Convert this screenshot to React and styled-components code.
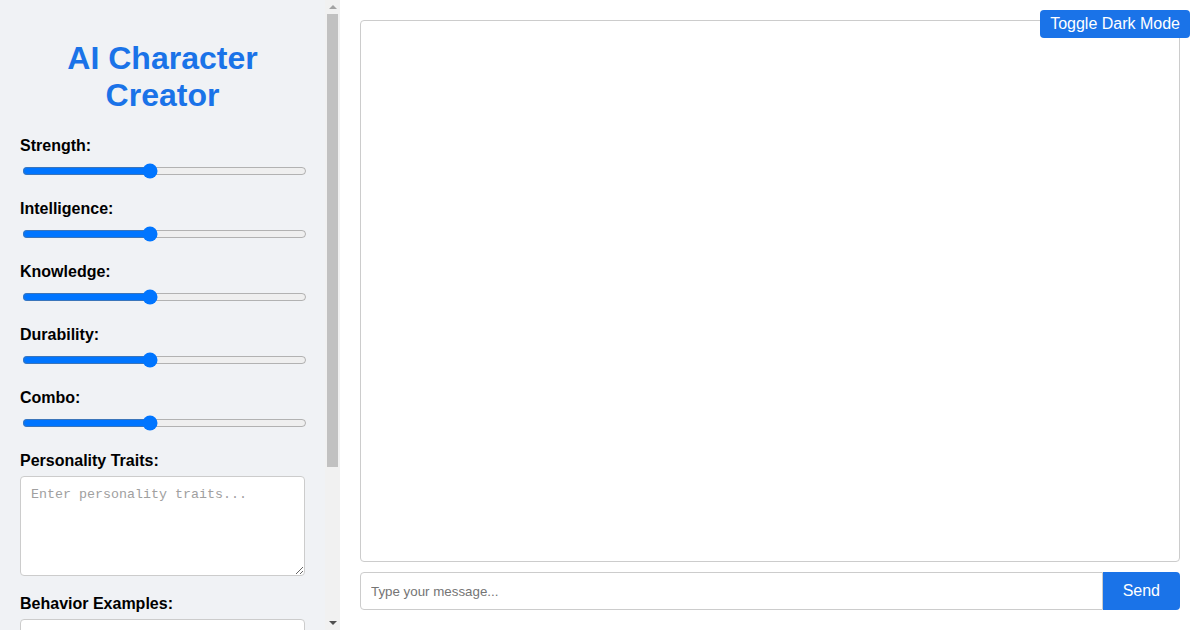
import React from "react";
import styled, { createGlobalStyle } from "styled-components";

const Global = createGlobalStyle`
  html, body {
    margin: 0;
    padding: 0;
    height: 100%;
    font-family: "Liberation Sans", Arial, sans-serif;
  }
  #root {
    height: 100%;
  }
`

const Layout = styled.div`
  display: flex;
  height: 100vh;
  position: relative;
`

const Sidebar = styled.div`
  width: 340px;
  flex-shrink: 0;
  display: flex;
  background: #f0f2f5;
`

const SidebarScroll = styled.div`
  flex: 1;
  min-width: 0;
  box-sizing: border-box;
  padding: 20px;
  overflow-y: auto;
  overflow-x: hidden;
  scrollbar-width: none;
  &::-webkit-scrollbar {
    display: none;
  }
  h1 {
    color: #1a73e8;
    text-align: center;
    font-size: 32px;
    line-height: 37px;
    margin: 20px 0 23px;
  }
`

const ScrollBar = styled.div`
  width: 15px;
  flex-shrink: 0;
  display: flex;
  flex-direction: column;
  background: #f1f1f1;
`

const Arrow = styled.div`
  height: 14px;
  flex-shrink: 0;
  display: flex;
  align-items: center;
  justify-content: center;
  &::after {
    content: "";
    width: 0;
    height: 0;
    border-left: 4px solid transparent;
    border-right: 4px solid transparent;
    ${p => p.$down
      ? "border-top: 4px solid #505050;"
      : "border-bottom: 4px solid #a3a3a3;"}
  }
`

const Track = styled.div`
  flex: 1;
  padding: 0 2px;
`

const Thumb = styled.div`
  height: 453px;
  background: #c1c1c1;
`

const Field = styled.div`
  display: flex;
  flex-direction: column;
  align-items: flex-start;
  margin-bottom: 19px;
  label {
    font-weight: bold;
    font-size: 16px;
    line-height: 18px;
    margin-bottom: 5px;
  }
  input[type="range"] {
    width: 100%;
    height: 16px;
    box-sizing: border-box;
    margin: 3px 2px 2px;
  }
  textarea {
    width: 100%;
    height: 100px;
    box-sizing: border-box;
    margin: 1px 0 0;
    padding: 10px;
    border: 1px solid #ccc;
    border-radius: 4px;
    resize: vertical;
    font-family: "Liberation Mono", monospace;
    font-size: 13.33px;
  }
  textarea::placeholder {
    color: #a0a0a0;
  }
`

const Main = styled.div`
  flex: 1;
  display: flex;
  flex-direction: column;
  padding: 20px;
  box-sizing: border-box;
  background: #fff;
`

const ChatBox = styled.div`
  flex: 1;
  border: 1px solid #ccc;
  border-radius: 4px;
  overflow-y: auto;
`

const InputRow = styled.div`
  display: flex;
  margin-top: 10px;
  input {
    flex: 1;
    padding: 10px;
    border: 1px solid #ccc;
    border-radius: 4px 0 0 4px;
    font-family: "Liberation Sans", Arial, sans-serif;
    font-size: 13.33px;
    outline: none;
  }
`

const Button = styled.button`
  background: #1a73e8;
  color: #fff;
  border: none;
  font-family: "Liberation Sans", Arial, sans-serif;
  font-size: 16px;
  cursor: pointer;
  padding: ${p => p.$small ? "5px 10px" : "10px 20px"};
  border-radius: ${p => p.$small ? "4px" : "0 4px 4px 0"};
`

const ToggleButton = styled(Button)`
  position: absolute;
  top: 10px;
  right: 10px;
`

const stats = ["Strength", "Intelligence", "Knowledge", "Durability", "Combo"];

export default function App() {
  return (
    <Layout>
      <Global />
      <Sidebar>
        <SidebarScroll>
          <h1>AI Character Creator</h1>
          {stats.map(s => (
            <Field key={s}>
              <label>{s}:</label>
              <input type="range" min="1" max="10" defaultValue="5" />
            </Field>
          ))}
          <Field>
            <label>Personality Traits:</label>
            <textarea placeholder="Enter personality traits..." />
          </Field>
          <Field>
            <label>Behavior Examples:</label>
            <textarea placeholder="Enter behavior examples..." />
          </Field>
        </SidebarScroll>
        <ScrollBar>
          <Arrow />
          <Track>
            <Thumb />
          </Track>
          <Arrow $down />
        </ScrollBar>
      </Sidebar>
      <Main>
        <ChatBox />
        <InputRow>
          <input type="text" placeholder="Type your message..." />
          <Button>Send</Button>
        </InputRow>
      </Main>
      <ToggleButton $small>Toggle Dark Mode</ToggleButton>
    </Layout>
  );
}
